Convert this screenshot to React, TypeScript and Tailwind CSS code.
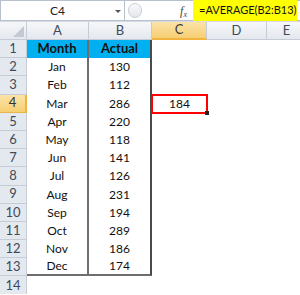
import React from 'react';

const rows: [string, string, string][] = [
  ['1', 'Month', 'Actual'],
  ['2', 'Jan', '130'],
  ['3', 'Feb', '112'],
  ['4', 'Mar', '286'],
  ['5', 'Apr', '220'],
  ['6', 'May', '118'],
  ['7', 'Jun', '141'],
  ['8', 'Jul', '126'],
  ['9', 'Aug', '231'],
  ['10', 'Sep', '194'],
  ['11', 'Oct', '289'],
  ['12', 'Nov', '186'],
  ['13', 'Dec', '174'],
];

function ColHead({ label, w, active }: { label: string; w: string; active?: boolean }) {
  return (
    <div
      className={`${w} shrink-0 flex items-center justify-center border-r border-[#c6ccd6] text-[13px] ${
        active
          ? 'bg-gradient-to-b from-[#fbe3a8] to-[#f6cf72] border-b-2 border-b-[#f2b43c] text-[#3a3a3a]'
          : 'bg-gradient-to-b from-[#f6f7f9] to-[#e4e8ee] border-b border-b-[#c6ccd6] text-[#3f4a5a]'
      }`}
    >
      {label}
    </div>
  );
}

export default function App() {
  return (
    <div className="w-[300px] h-[295px] overflow-hidden bg-white" style={{ fontFamily: 'Lato, "Open Sans", sans-serif' }}>
      {/* formula bar */}
      <div className="h-[22px] flex items-stretch bg-[#eef0f4] border-b border-[#d6dbe3]">
        <div className="w-[125px] flex items-center bg-white border border-[#b8c0cc] relative">
          <span className="flex-1 text-center text-[12px] text-[#222] pr-[10px]">C4</span>
          <span className="absolute right-[3px] top-[9px] w-0 h-0 border-l-[3px] border-r-[3px] border-t-[3px] border-l-transparent border-r-transparent border-t-[#555]" />
        </div>
        <div className="w-[68px] flex items-center justify-between pl-[3px] pr-[6px] bg-white border-y border-[#b8c0cc]">
          <span className="w-[14px] h-[15px] rounded-full border border-[#c9ced6] bg-gradient-to-b from-[#f8f9fb] to-[#e2e6ec]" />
          <span className="text-[12px] italic text-[#444]" style={{ fontFamily: '"Liberation Serif", serif' }}>
            f<sub className="text-[8px]">x</sub>
          </span>
        </div>
        <div className="w-[104px] flex items-center bg-[#ffff00] pl-[6px] text-[11px] text-[#111] whitespace-nowrap">=AVERAGE(B2:B13)</div>
        <div className="flex-1 bg-white border-y border-[#b8c0cc]" />
      </div>

      {/* column headers */}
      <div className="h-[18px] flex">
        <div className="w-[27px] shrink-0 relative bg-gradient-to-b from-[#f6f7f9] to-[#e4e8ee] border-r border-b border-[#c6ccd6]">
          <svg className="absolute right-[2px] bottom-[2px]" width="11" height="11" viewBox="0 0 11 11">
            <polygon points="11,0 11,11 0,11" fill="#c3c9d2" />
          </svg>
        </div>
        <ColHead label="A" w="w-[62px]" />
        <ColHead label="B" w="w-[63px]" />
        <ColHead label="C" w="w-[55px]" active />
        <ColHead label="D" w="w-[60px]" />
        <ColHead label="E" w="w-[40px]" />
      </div>

      {/* rows */}
      {rows.map(([n, m, v], i) => {
        const head = i === 0;
        const last = i === rows.length - 1;
        const active = n === '4';
        return (
          <div key={n} className="h-[18.2px] flex text-[12px] text-[#111]">
            <div
              className={`w-[27px] shrink-0 flex items-center justify-center border-r border-b text-[13px] ${
                active
                  ? 'bg-gradient-to-b from-[#fbe3a8] to-[#f6cf72] border-[#e8b64a] border-r-2 border-r-[#f2b43c] text-[#333]'
                  : 'bg-[#e4e9f0] border-[#c6ccd6] text-[#3f4a5a]'
              }`}
            >
              {n}
            </div>
            <div
              className={`w-[62px] shrink-0 flex items-center justify-center border-r-2 border-r-[#6e6e6e] ${
                head ? 'bg-[#00b0f0] font-bold text-[13px]' : ''
              } ${last ? 'border-b-2 border-b-[#6e6e6e]' : ''}`}
            >
              {m}
            </div>
            <div
              className={`w-[63px] shrink-0 flex items-center justify-center border-r-2 border-r-[#4a4a4a] ${
                head ? 'bg-[#00b0f0] font-bold text-[13px]' : ''
              } ${last ? 'border-b-2 border-b-[#6e6e6e]' : ''}`}
            >
              {v}
            </div>
            <div className="w-[55px] shrink-0 relative">
              {active && (
                <div className="absolute -left-[1px] -top-[1px] w-[57px] h-[20px] border-2 border-[#ff0000] flex items-center justify-center">
                  184
                  <span className="absolute -right-[3px] -bottom-[3px] w-[4px] h-[4px] bg-[#222]" />
                </div>
              )}
            </div>
          </div>
        );
      })}
      <div className="h-[18px] flex">
        <div className="w-[27px] shrink-0 flex items-center justify-center bg-[#e4e9f0] border-r border-[#c6ccd6] text-[13px] text-[#3f4a5a]">
          14
        </div>
      </div>
    </div>
  );
}
